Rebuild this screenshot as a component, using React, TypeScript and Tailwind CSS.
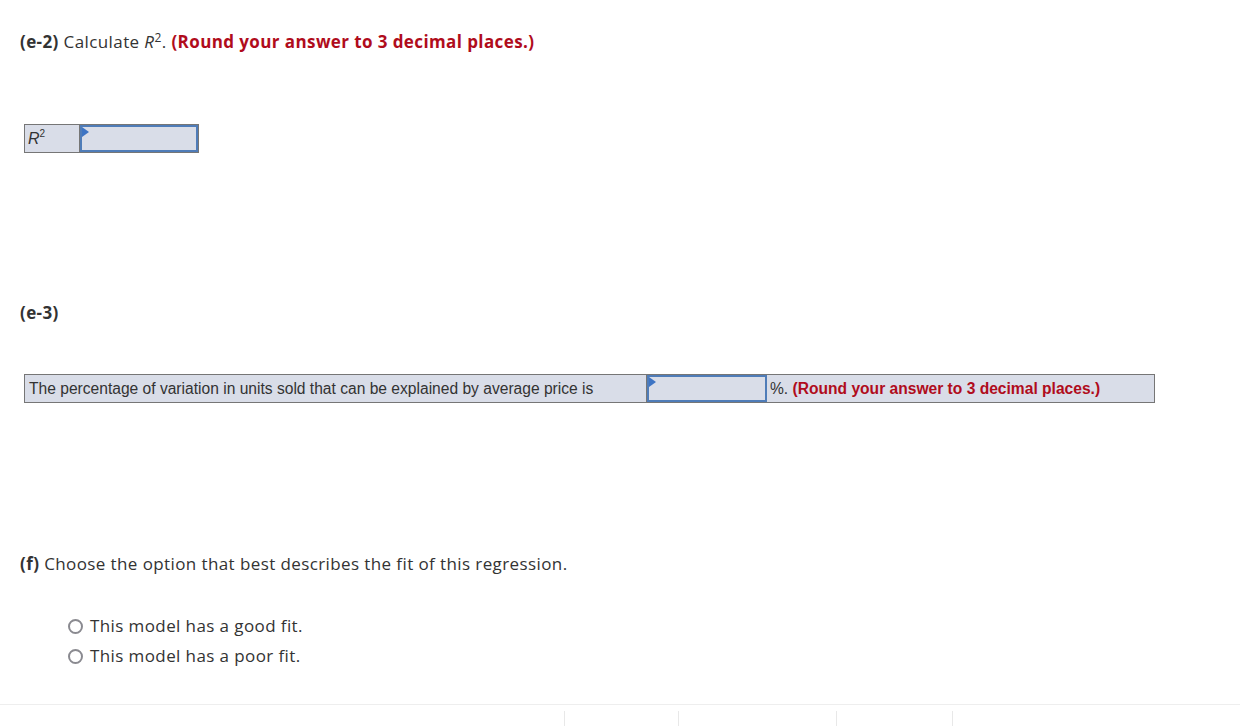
import React from 'react';

const prose = { fontFamily: '"Open Sans", Lato, sans-serif' };
const arial = { fontFamily: '"Liberation Sans", Arial, sans-serif' };

// small blue marker in the corner of an answer field
const Marker = () => (
  <svg className="absolute left-0 top-0" width="7" height="10" viewBox="0 0 7 10">
    <path d="M0 0 L7 5 L0 10 Z" fill="#3d74c4" />
  </svg>
);

const AnswerField: React.FC<{ width: string }> = ({ width }) => (
  <div className={`relative h-full border-2 border-[#4f7cb8] bg-[#d9dde8] ${width}`}>
    <Marker />
  </div>
);

const Radio: React.FC<{ label: string }> = ({ label }) => (
  <label className="flex h-[30px] items-center gap-[7px]">
    <span className="h-[15px] w-[15px] rounded-full border-2 border-[#8a8a90] bg-white" />
    <span className="text-[17px] tracking-[0.4px] text-[#333]">{label}</span>
  </label>
);

export default function App() {
  return (
    <div className="min-h-[726px] bg-white text-[#333] [font-variant-ligatures:none]" style={prose}>
      <div className="px-[20px] pt-[30px]">
        <p className="text-[17px] leading-[24px] tracking-[0.4px]">
          <b className="font-bold">(e-2)</b> Calculate <i>R</i>
          <sup className="text-[12px]">2</sup>.{' '}
          <b className="font-bold text-[#b00c1c]">(Round your answer to 3 decimal places.)</b>
        </p>

        <div className="ml-[4px] mt-[70px] flex h-[29px] w-[175px] border border-[#767676] bg-[#d9dde8]" style={arial}>
          <div className="flex w-[55px] items-center border-r border-[#767676] pl-[3px] text-[16px]">
            <i>R</i>
            <sup className="text-[10px]">2</sup>
          </div>
          <AnswerField width="flex-1" />
        </div>

        <p className="mt-[148px] text-[17px] font-bold leading-[24px] tracking-[0.4px]">(e-3)</p>

        <div className="ml-[4px] mt-[49px] flex h-[29px] w-[1131px] border border-[#767676] bg-[#d9dde8] text-[15.6px]" style={arial}>
          <div className="flex w-[622px] items-center border-r border-[#767676] pl-[4px]">
            The percentage of variation in units sold that can be explained by average price is
          </div>
          <AnswerField width="w-[120px]" />
          <div className="flex flex-1 items-center pl-[3px]">
            %.&nbsp;<b className="font-bold text-[#b00c1c]">(Round your answer to 3 decimal places.)</b>
          </div>
        </div>

        <p className="mt-[149px] text-[17px] leading-[24px] tracking-[0.4px]">
          <b className="font-bold">(f)</b> Choose the option that best describes the fit of this regression.
        </p>

        <div className="ml-[48px] mt-[35px] flex flex-col">
          <Radio label="This model has a good fit." />
          <Radio label="This model has a poor fit." />
        </div>
      </div>

      <div className="mt-[33px] border-t border-[#eeeeee] pt-[6px]">
        <div className="flex h-[15px]">
          <div className="w-[564px]" />
          <div className="w-[114px] border-l border-[#e8e8e8]" />
          <div className="w-[158px] border-l border-[#e8e8e8]" />
          <div className="w-[116px] border-l border-[#e8e8e8]" />
          <div className="flex-1 border-l border-[#e8e8e8]" />
        </div>
      </div>
    </div>
  );
}
